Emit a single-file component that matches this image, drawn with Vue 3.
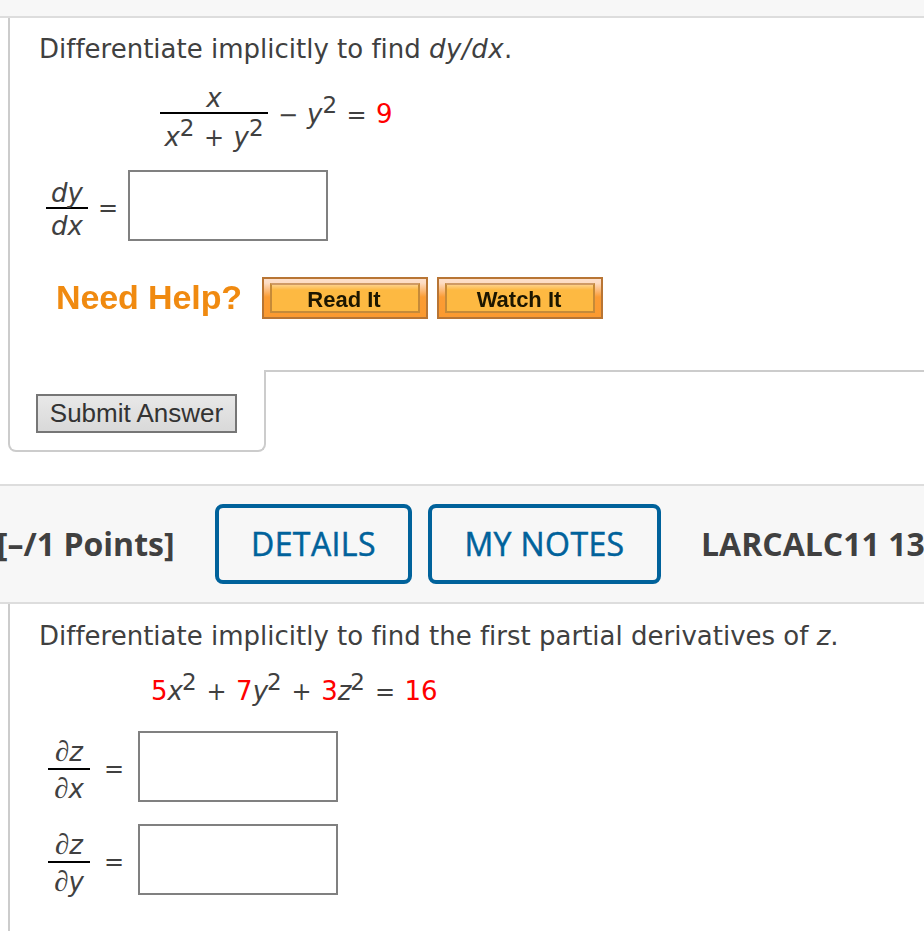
<script setup>
import { ref } from 'vue'

const dydx = ref('')
const helpLinks = ['Read It', 'Watch It']

const partials = ref([
  { by: 'x', answer: '' },
  { by: 'y', answer: '' },
])

const terms = [
  { coef: 5, name: 'x', op: '+' },
  { coef: 7, name: 'y', op: '+' },
  { coef: 3, name: 'z', op: '=' },
]
</script>

<template>
  <div class="assignment">
    <div class="strip"></div>

    <section class="question first">
      <p class="prompt">Differentiate implicitly to find <i class="dydx">dy/dx</i>.</p>

      <div class="equation main-eq">
        <span class="frac wide">
          <span class="num"><i>x</i></span>
          <span class="den"><i>x</i><sup>2</sup><span class="op">+</span><i>y</i><sup>2</sup></span>
        </span>
        <span class="rest">
          <span class="minus">−</span><i>y</i><sup>2</sup><span class="op">=</span><span class="red">9</span>
        </span>
      </div>

      <div class="answer-row">
        <span class="frac small">
          <span class="num"><i>dy</i></span>
          <span class="den"><i>dx</i></span>
        </span>
        <span class="eq">=</span>
        <input v-model="dydx" class="answer" type="text" />
      </div>

      <div class="help">
        <span class="help-label">Need Help?</span>
        <button v-for="link in helpLinks" :key="link" class="help-btn">
          <span>{{ link }}</span>
        </button>
      </div>
    </section>

    <div class="footer">
      <div class="submit-tab">
        <button class="submit">Submit Answer</button>
      </div>
      <div class="footer-line"></div>
    </div>

    <header class="bar">
      <strong class="points">[–/1 Points]</strong>
      <button class="bar-btn details">DETAILS</button>
      <button class="bar-btn notes">MY NOTES</button>
      <strong class="source">LARCALC11 13</strong>
    </header>

    <section class="question second">
      <p class="prompt">Differentiate implicitly to find the first partial derivatives of <i>z</i>.</p>

      <div class="poly">
        <template v-for="t in terms" :key="t.name">
          <span class="red">{{ t.coef }}</span><i>{{ t.name }}</i><sup>2</sup><span class="op">{{ t.op }}</span>
        </template>
        <span class="red">16</span>
      </div>

      <div v-for="p in partials" :key="p.by" class="answer-row partial">
        <span class="frac small">
          <span class="num"><span class="del">∂</span><i>z</i></span>
          <span class="den"><span class="del">∂</span><i>{{ p.by }}</i></span>
        </span>
        <span class="eq">=</span>
        <input v-model="p.answer" class="answer" type="text" />
      </div>
    </section>
  </div>
</template>

<style>
body {
  margin: 0;
  background: #fff;
}
</style>

<style scoped>
.assignment {
  width: 100%;
  height: 931px;
  overflow: hidden;
  background: #fff;
  color: #404040;
  font-family: Verdana, "DejaVu Sans", sans-serif;
  font-size: 26px;
  line-height: 32px;
  font-variant-ligatures: none;
}

.assignment * {
  box-sizing: border-box;
}

.strip {
  height: 18px;
  background: #f7f7f7;
  border-bottom: 2px solid #ddd;
}

.question {
  margin-left: 8px;
  padding: 15px 0 0 29px;
  border-left: 2px solid #ccc;
}

.first {
  height: 352px;
}

.second {
  height: 327px;
  padding-top: 16px;
}

.prompt {
  margin: 0;
  white-space: nowrap;
}

.dydx {
  letter-spacing: 0.5px;
}

.red {
  color: #f00;
}

.equation {
  display: flex;
  white-space: nowrap;
}

sup {
  font-size: 23px;
  line-height: 1;
  vertical-align: baseline;
  position: relative;
  top: -10px;
}

.op {
  display: inline-block;
  width: 39px;
  font-size: 24px;
  text-align: center;
}

.main-eq {
  height: 74px;
  margin: 17px 0 0 121px;
}

.frac {
  display: flex;
  flex-direction: column;
  text-align: center;
}

.num {
  border-bottom: 2px solid #000;
}

.wide {
  width: 108px;
}

.wide .num {
  height: 32px;
}

.wide .den {
  padding-top: 7px;
}

.rest {
  padding: 16px 0 0 10px;
}

.minus {
  display: inline-block;
  width: 29px;
  font-size: 24px;
}

.answer-row {
  display: flex;
  height: 71px;
  margin: 14px 0 0 7px;
}

.small {
  width: 42px;
  margin-top: 7px;
}

.small .num {
  height: 32px;
}

.small .den {
  padding-top: 1px;
}

.eq {
  width: 40px;
  padding-top: 22px;
  font-size: 24px;
  text-align: center;
}

.answer {
  width: 200px;
  height: 71px;
  margin: 0;
  padding: 0 8px;
  border: 2px solid #808080;
  background: #fff;
  font: inherit;
  outline: none;
}

.help {
  display: flex;
  align-items: center;
  gap: 9px;
  height: 42px;
  margin: 36px 0 0 16px;
  font-family: Arial, "Liberation Sans", sans-serif;
  font-weight: bold;
}

.help-label {
  width: 198px;
  padding: 0 0 2px 1px;
  color: #f08a10;
  font-size: 34px;
  letter-spacing: -0.1px;
  filter: blur(0.5px);
}

.help-btn {
  width: 166px;
  height: 42px;
  padding: 4px 6px;
  border: 2px solid #b87534;
  background: linear-gradient(#fde0cc, #fddcc4 4px, #fb9c34 18px, #fb9a30);
}

.help-btn span {
  display: block;
  height: 30px;
  padding-right: 2px;
  border: 2px solid #c58a38;
  border-top-color: #cf9a66;
  background: linear-gradient(#fdd089, #fdb942 5px);
  color: #1c1600;
  font: bold 22px/29px Arial, "Liberation Sans", sans-serif;
  filter: blur(0.4px);
}

.footer {
  display: flex;
  height: 82px;
  margin-left: 8px;
}

.submit-tab {
  width: 258px;
  padding: 24px 0 0 26px;
  border: 2px solid #ccc;
  border-top: 0;
  border-radius: 0 0 8px 8px;
}

.footer-line {
  flex: 1;
  height: 2px;
  background: #ccc;
}

.submit {
  width: 201px;
  height: 39px;
  padding: 0 0 1px;
  border: 2px solid #767676;
  background: linear-gradient(#e8e8e8, #d9d9d9);
  color: #333;
  font: 26px/34px Arial, "Liberation Sans", sans-serif;
}

.bar {
  display: flex;
  align-items: center;
  height: 120px;
  margin-top: 32px;
  border: 2px solid #ddd;
  border-width: 2px 0;
  background: #f7f7f7;
  font-family: "Open Sans", sans-serif;
  font-size: 32px;
  white-space: nowrap;
}

.points {
  width: 215px;
  flex: none;
  text-indent: -3px;
}

.bar-btn {
  flex: none;
  height: 80px;
  padding: 0;
  border: 4px solid #00629b;
  border-radius: 8px;
  background: transparent;
  color: #00629b;
  font: 32px/72px "Open Sans", sans-serif;
  letter-spacing: 0.4px;
  -webkit-text-stroke: 0.5px #00629b;
}

.details {
  width: 197px;
  margin-right: 16px;
}

.notes {
  width: 233px;
  margin-right: 40px;
}

.poly {
  height: 32px;
  margin: 23px 0 0 112px;
  white-space: nowrap;
}

.poly sup {
  margin: 0 0.5px 0 -1px;
}

.partial {
  margin: 22px 0 0 9px;
}

.poly + .partial {
  margin-top: 24px;
}

.partial .small {
  margin-top: 5px;
}

.partial .small .num {
  height: 34px;
}

.partial .small .den {
  padding-top: 3px;
}

.partial .eq {
  width: 48px;
}

.del {
  font-family: "Liberation Serif", serif;
  font-size: 29px;
  font-style: italic;
  line-height: 1;
}
</style>
